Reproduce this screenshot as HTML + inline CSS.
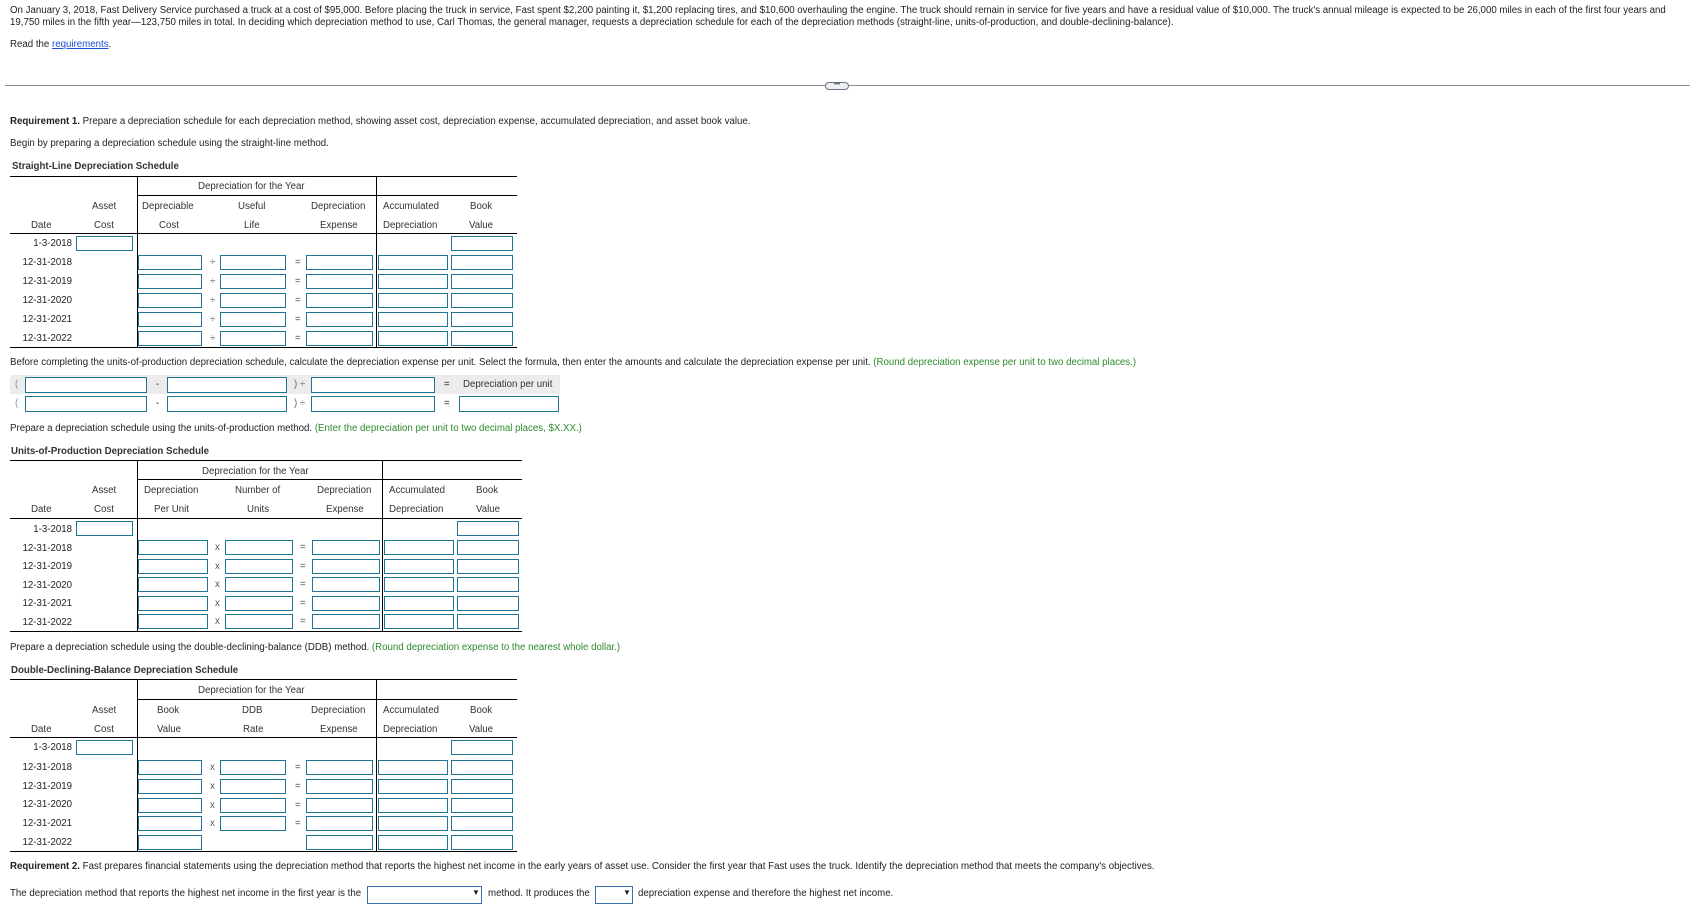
<!DOCTYPE html>
<html><head><meta charset="utf-8"><style>
body{margin:0;width:1697px;height:911px;position:relative;background:#fff;font-family:"Liberation Sans",Arial,sans-serif;font-size:9.7px;color:#222;overflow:hidden}
.t{position:absolute;white-space:nowrap;line-height:12px}
.h{color:#333}
.b{font-weight:bold}
.i{position:absolute;border:1px solid #1f7593;box-sizing:border-box;height:15px;background:#fff}
.ln{position:absolute;background:#000}
.d{position:absolute;left:6px;width:66px;text-align:right;line-height:12px}
.g{color:#2e8b2e}
</style></head><body>
<div class="t" style="left:10px;top:5px">On January 3, 2018, Fast Delivery Service purchased a truck at a cost of $95,000. Before placing the truck in service, Fast spent $2,200 painting it, $1,200 replacing tires, and $10,600 overhauling the engine. The truck should remain in service for five years and have a residual value of $10,000. The truck's annual mileage is expected to be 26,000 miles in each of the first four years and</div>
<div class="t" style="left:10px;top:17px">19,750 miles in the fifth year—123,750 miles in total. In deciding which depreciation method to use, Carl Thomas, the general manager, requests a depreciation schedule for each of the depreciation methods (straight-line, units-of-production, and double-declining-balance).</div>
<div class="t" style="left:10px;top:39px">Read the <span style="color:#1a4fd6;text-decoration:underline">requirements</span>.</div>
<div style="position:absolute;left:5px;top:85px;width:1685px;height:1px;background:#8a8f99"></div>
<div style="position:absolute;left:825px;top:82px;width:22px;height:6px;border:1px solid #6a7080;border-radius:4px;background:#eef0f3;font-size:6px;line-height:5px;text-align:center;color:#445">•••</div>

<div class="t" style="left:10px;top:116px"><b>Requirement 1.</b> Prepare a depreciation schedule for each depreciation method, showing asset cost, depreciation expense, accumulated depreciation, and asset book value.</div>
<div class="t" style="left:10px;top:138px">Begin by preparing a depreciation schedule using the straight-line method.</div>
<div class="t b h" style="left:12px;top:161px">Straight-Line Depreciation Schedule</div>

<div class="ln" style="left:10px;top:176px;width:507px;height:1px"></div>
<div class="ln" style="left:137px;top:195px;width:380px;height:1px"></div>
<div class="ln" style="left:10px;top:233px;width:507px;height:1px"></div>
<div class="ln" style="left:10px;top:347px;width:507px;height:1px"></div>
<div class="ln" style="left:137px;top:176px;width:1px;height:172px"></div>
<div class="ln" style="left:376px;top:176px;width:1px;height:172px"></div>
<div class="t h" style="left:198px;top:181px">Depreciation for the Year</div>
<div class="t h" style="left:92px;top:201px">Asset</div><div class="t h" style="left:94px;top:220px">Cost</div><div class="t h" style="left:31px;top:220px">Date</div>
<div class="t h" style="left:142px;top:201px">Depreciable</div><div class="t h" style="left:159px;top:220px">Cost</div>
<div class="t h" style="left:238px;top:201px">Useful</div><div class="t h" style="left:244px;top:220px">Life</div>
<div class="t h" style="left:311px;top:201px">Depreciation</div><div class="t h" style="left:320px;top:220px">Expense</div>
<div class="t h" style="left:383px;top:201px">Accumulated</div><div class="t h" style="left:383px;top:220px">Depreciation</div>
<div class="t h" style="left:470px;top:201px">Book</div><div class="t h" style="left:469px;top:220px">Value</div>
<div class="d" style="top:238px">1-3-2018</div><div class="i" style="left:76px;top:236px;width:57px"></div><div class="i" style="left:451px;top:236px;width:62px"></div>
<div class="d" style="top:257px">12-31-2018</div>
<div class="d" style="top:276px">12-31-2019</div>
<div class="d" style="top:295px">12-31-2020</div>
<div class="d" style="top:314px">12-31-2021</div>
<div class="d" style="top:333px">12-31-2022</div>
<div id="sl"></div>

<div class="t" style="left:10px;top:357px">Before completing the units-of-production depreciation schedule, calculate the depreciation expense per unit. Select the formula, then enter the amounts and calculate the depreciation expense per unit. <span class="g">(Round depreciation expense per unit to two decimal places.)</span></div>
<div style="position:absolute;left:10px;top:375px;width:550px;height:19px;background:#ececec"></div>
<div class="t" style="left:15px;top:379px;color:#7a9ab0">(</div><div class="i" style="left:25px;top:377px;width:122px;height:16px"></div>
<div class="t" style="left:156px;top:379px">-</div><div class="i" style="left:167px;top:377px;width:120px;height:16px"></div>
<div class="t" style="left:294px;top:379px;color:#666">) ÷</div><div class="i" style="left:311px;top:377px;width:124px;height:16px"></div>
<div class="t" style="left:444px;top:379px">=</div><div class="t h" style="left:463px;top:379px">Depreciation per unit</div>
<div class="t" style="left:15px;top:398px;color:#7a9ab0">(</div><div class="i" style="left:25px;top:396px;width:122px;height:16px"></div>
<div class="t" style="left:156px;top:398px">-</div><div class="i" style="left:167px;top:396px;width:120px;height:16px"></div>
<div class="t" style="left:294px;top:398px;color:#666">) ÷</div><div class="i" style="left:311px;top:396px;width:124px;height:16px"></div>
<div class="t" style="left:444px;top:398px">=</div><div class="i" style="left:459px;top:396px;width:100px;height:16px"></div>

<div class="t" style="left:10px;top:423px">Prepare a depreciation schedule using the units-of-production method. <span class="g">(Enter the depreciation per unit to two decimal places, $X.XX.)</span></div>
<div class="t b h" style="left:11px;top:446px">Units-of-Production Depreciation Schedule</div>
<div class="ln" style="left:10px;top:460px;width:512px;height:1px"></div>
<div class="ln" style="left:137px;top:479px;width:385px;height:1px"></div>
<div class="ln" style="left:10px;top:518px;width:512px;height:1px"></div>
<div class="ln" style="left:10px;top:631px;width:512px;height:1px"></div>
<div class="ln" style="left:137px;top:460px;width:1px;height:172px"></div>
<div class="ln" style="left:382px;top:460px;width:1px;height:172px"></div>
<div class="t h" style="left:202px;top:466px">Depreciation for the Year</div>
<div class="t h" style="left:92px;top:485px">Asset</div><div class="t h" style="left:94px;top:504px">Cost</div><div class="t h" style="left:31px;top:504px">Date</div>
<div class="t h" style="left:144px;top:485px">Depreciation</div><div class="t h" style="left:154px;top:504px">Per Unit</div>
<div class="t h" style="left:235px;top:485px">Number of</div><div class="t h" style="left:247px;top:504px">Units</div>
<div class="t h" style="left:317px;top:485px">Depreciation</div><div class="t h" style="left:326px;top:504px">Expense</div>
<div class="t h" style="left:389px;top:485px">Accumulated</div><div class="t h" style="left:389px;top:504px">Depreciation</div>
<div class="t h" style="left:476px;top:485px">Book</div><div class="t h" style="left:476px;top:504px">Value</div>
<div class="d" style="top:524px">1-3-2018</div><div class="i" style="left:76px;top:521px;width:57px"></div><div class="i" style="left:457px;top:521px;width:62px"></div>
<div class="d" style="top:543px">12-31-2018</div>
<div class="d" style="top:561px">12-31-2019</div>
<div class="d" style="top:580px">12-31-2020</div>
<div class="d" style="top:598px">12-31-2021</div>
<div class="d" style="top:617px">12-31-2022</div>
<div id="up"></div>

<div class="t" style="left:10px;top:642px">Prepare a depreciation schedule using the double-declining-balance (DDB) method. <span class="g">(Round depreciation expense to the nearest whole dollar.)</span></div>
<div class="t b h" style="left:11px;top:665px">Double-Declining-Balance Depreciation Schedule</div>
<div class="ln" style="left:10px;top:679px;width:507px;height:1px"></div>
<div class="ln" style="left:137px;top:699px;width:380px;height:1px"></div>
<div class="ln" style="left:10px;top:737px;width:507px;height:1px"></div>
<div class="ln" style="left:10px;top:851px;width:507px;height:1px"></div>
<div class="ln" style="left:137px;top:679px;width:1px;height:173px"></div>
<div class="ln" style="left:376px;top:679px;width:1px;height:173px"></div>
<div class="t h" style="left:198px;top:685px">Depreciation for the Year</div>
<div class="t h" style="left:92px;top:705px">Asset</div><div class="t h" style="left:94px;top:724px">Cost</div><div class="t h" style="left:31px;top:724px">Date</div>
<div class="t h" style="left:157px;top:705px">Book</div><div class="t h" style="left:157px;top:724px">Value</div>
<div class="t h" style="left:242px;top:705px">DDB</div><div class="t h" style="left:243px;top:724px">Rate</div>
<div class="t h" style="left:311px;top:705px">Depreciation</div><div class="t h" style="left:320px;top:724px">Expense</div>
<div class="t h" style="left:383px;top:705px">Accumulated</div><div class="t h" style="left:383px;top:724px">Depreciation</div>
<div class="t h" style="left:470px;top:705px">Book</div><div class="t h" style="left:469px;top:724px">Value</div>
<div class="d" style="top:742px">1-3-2018</div><div class="i" style="left:76px;top:740px;width:57px"></div><div class="i" style="left:451px;top:740px;width:62px"></div>
<div class="d" style="top:762px">12-31-2018</div>
<div class="d" style="top:781px">12-31-2019</div>
<div class="d" style="top:799px">12-31-2020</div>
<div class="d" style="top:818px">12-31-2021</div>
<div class="d" style="top:837px">12-31-2022</div>
<div id="dd"></div>

<div class="t" style="left:10px;top:861px"><b>Requirement 2.</b> Fast prepares financial statements using the depreciation method that reports the highest net income in the early years of asset use. Consider the first year that Fast uses the truck. Identify the depreciation method that meets the company's objectives.</div>
<div class="t" style="left:10px;top:888px">The depreciation method that reports the highest net income in the first year is the</div>
<div class="i" style="left:367px;top:886px;width:115px;height:18px;border-color:#3a6fb0"></div>
<div class="t" style="left:472px;top:887px;font-size:8px">▼</div>
<div class="t" style="left:488px;top:888px">method. It produces the</div>
<div class="i" style="left:595px;top:886px;width:38px;height:18px;border-color:#3a6fb0"></div>
<div class="t" style="left:623px;top:887px;font-size:8px">▼</div>
<div class="t" style="left:638px;top:888px">depreciation expense and therefore the highest net income.</div>

<script>
function rows(id,ys,c,op,skipLast){var h='';ys.forEach(function(y,k){var last=skipLast&&k==ys.length-1;
h+='<div class="i" style="left:'+c[0]+'px;top:'+y+'px;width:'+c[1]+'px"></div>';
if(!last){h+='<div class="t" style="left:'+c[2]+'px;top:'+(y+2)+'px;color:#555">'+op+'</div>';
h+='<div class="i" style="left:'+c[3]+'px;top:'+y+'px;width:'+c[4]+'px"></div>';
h+='<div class="t" style="left:'+c[5]+'px;top:'+(y+2)+'px;color:#555">=</div>';}
h+='<div class="i" style="left:'+c[6]+'px;top:'+y+'px;width:'+c[7]+'px"></div>';
h+='<div class="i" style="left:'+c[8]+'px;top:'+y+'px;width:'+c[9]+'px"></div>';
h+='<div class="i" style="left:'+c[10]+'px;top:'+y+'px;width:'+c[11]+'px"></div>';});
document.getElementById(id).outerHTML=h;}
rows('sl',[255,274,293,312,331],[138,64,210,220,66,295,306,67,378,70,451,62],'÷');
rows('up',[540,559,577,596,614],[138,70,215,225,68,300,312,68,384,70,457,62],'x');
rows('dd',[760,779,798,816,835],[138,64,210,220,66,295,306,67,378,70,451,62],'x',true);
</script>
</body></html>
